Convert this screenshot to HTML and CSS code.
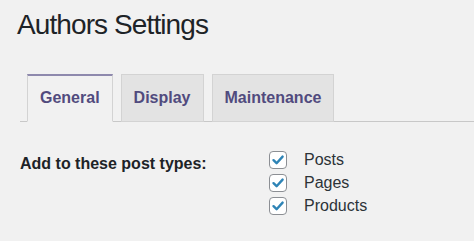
FILE: index.html
```html
<!DOCTYPE html>
<html lang="en">
<head>
    <meta charset="UTF-8">
    <title>Authors Settings</title>
    <link rel="stylesheet" href="styles.css">
</head>
<body>
    <div class="wrap">
        <h1>Authors Settings</h1>

        <nav class="nav-tabs">
            <a class="nav-tab active">General</a>
            <a class="nav-tab">Display</a>
            <a class="nav-tab">Maintenance</a>
        </nav>

        <div class="form-row">
            <div class="form-label">Add to these post types:</div>
            <div class="form-field">
                <label class="check-item">
                    <span class="check-box">
                        <svg viewBox="0 0 16 16" width="16" height="16"><path d="M3.5 8.2 L6.6 11.2 L12.6 4.6" fill="none" stroke="#2e84b6" stroke-width="2.4" stroke-linecap="round" stroke-linejoin="round"/></svg>
                    </span>
                    Posts
                </label>
                <label class="check-item">
                    <span class="check-box">
                        <svg viewBox="0 0 16 16" width="16" height="16"><path d="M3.5 8.2 L6.6 11.2 L12.6 4.6" fill="none" stroke="#2e84b6" stroke-width="2.4" stroke-linecap="round" stroke-linejoin="round"/></svg>
                    </span>
                    Pages
                </label>
                <label class="check-item">
                    <span class="check-box">
                        <svg viewBox="0 0 16 16" width="16" height="16"><path d="M3.5 8.2 L6.6 11.2 L12.6 4.6" fill="none" stroke="#2e84b6" stroke-width="2.4" stroke-linecap="round" stroke-linejoin="round"/></svg>
                    </span>
                    Products
                </label>
            </div>
        </div>
    </div>
</body>
</html>
```

FILE: styles.css
```css
* {
    margin: 0;
    padding: 0;
    box-sizing: border-box;
}

body {
    font-family: 'Liberation Sans', Arial, sans-serif;
    background: #f1f1f1;
    color: #1d2327;
    overflow: hidden;
}

.wrap {
    padding-left: 17px;
}

h1 {
    margin-top: 8px;
    font-size: 28px;
    font-weight: 400;
    line-height: 34px;
    letter-spacing: -0.9px;
}

.nav-tabs {
    display: flex;
    gap: 8px;
    margin-left: 3px;
    padding: 32px 0 0 7px;
    border-bottom: 1px solid #c8c8c8;
}

.nav-tab {
    display: block;
    padding: 10px 12px;
    margin-bottom: -1px;
    font-size: 16px;
    font-weight: 700;
    line-height: 26px;
    color: #514b7e;
    background: #e3e3e3;
    border: 1px solid #d3d3d3;
}

.nav-tab.active {
    background: #f1f1f1;
    border-top: 2px solid #8e89ad;
    padding-top: 9px;
    border-bottom-color: #f1f1f1;
}

.form-row {
    display: flex;
    margin-top: 26px;
    margin-left: 3px;
}

.form-label {
    width: 249px;
    padding-top: 4px;
    font-size: 16px;
    font-weight: 700;
    line-height: 23px;
}

.form-field {
    display: flex;
    flex-direction: column;
}

.check-item {
    display: flex;
    align-items: center;
    gap: 17px;
    font-size: 16px;
    line-height: 23px;
    color: #2c3338;
}

.check-box {
    display: flex;
    align-items: center;
    justify-content: center;
    width: 18px;
    height: 18px;
    background: #fff;
    border: 1px solid #8c8f94;
    border-radius: 4px;
}
```
